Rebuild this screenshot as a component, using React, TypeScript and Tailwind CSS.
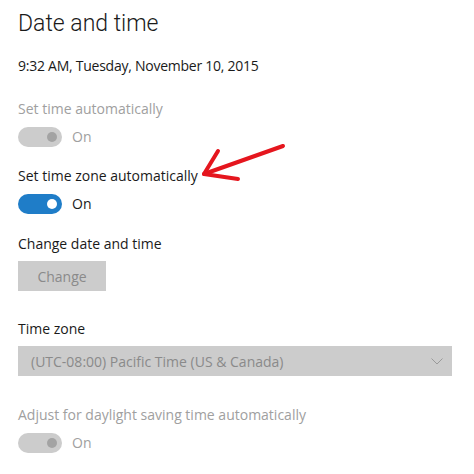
import React from "react";

const font = { fontFamily: '"Open Sans", "Noto Sans", sans-serif' };

function Toggle({ on, disabled }: { on?: boolean; disabled?: boolean }) {
  return (
    <div className="flex items-center h-[20px]">
      <div
        className={
          "w-[44px] h-[20px] rounded-full flex items-center justify-end pr-[5px] " +
          (disabled ? "bg-[#cccccc]" : "bg-[#1f7dc8]")
        }
      >
        <div
          className={
            "w-[10px] h-[10px] rounded-full " +
            (disabled ? "bg-[#a3a3a3]" : "bg-white")
          }
        />
      </div>
      <span
        className={
          "ml-[10px] text-[14px] leading-[20px] " +
          (disabled ? "text-[#a0a0a0]" : "text-[#1a1a1a]")
        }
      >
        On
      </span>
    </div>
  );
}

export default function App() {
  return (
    <div
      className="relative w-[474px] h-[474px] bg-white overflow-hidden pl-[18px] pt-[8px] flex flex-col"
      style={font}
    >
      <div
        className="text-[23px] leading-[32px] font-light text-[#1a1a1a]"
        style={{ fontFamily: 'Roboto, "Open Sans", sans-serif' }}
      >
        Date and time
      </div>
      <div className="mt-[16px] text-[14px] leading-[20px] tracking-[-0.25px] text-[#1a1a1a]">
        9:32 AM, Tuesday, November 10, 2015
      </div>

      <div className="mt-[23px] text-[14px] leading-[20px] text-[#a0a0a0]">Set time automatically</div>
      <div className="mt-[8px]">
        <Toggle disabled />
      </div>

      <div className="mt-[19px] text-[14px] leading-[20px] text-[#1a1a1a]">Set time zone automatically</div>
      <div className="mt-[8px]">
        <Toggle on />
      </div>

      <div className="mt-[20px] text-[14px] leading-[20px] text-[#1a1a1a]">Change date and time</div>
      <div className="mt-[7px] w-[88px] h-[30px] bg-[#cccccc] flex items-center justify-center text-[14px] text-[#8a8a8a]">
        Change
      </div>

      <div className="mt-[28px] text-[14px] leading-[20px] text-[#1a1a1a]">Time zone</div>
      <div className="mt-[7px] w-[434px] h-[30px] bg-[#cccccc] flex items-center justify-between pl-[13px] pr-[9px] text-[14px] text-[#8a8a8a]">
        <span>(UTC-08:00) Pacific Time (US &amp; Canada)</span>
        <svg width="12" height="7" viewBox="0 0 12 7" fill="none">
          <path d="M0.5 0.5 L6 6 L11.5 0.5" stroke="#9a9a9a" strokeWidth="1" />
        </svg>
      </div>

      <div className="mt-[29px] text-[14px] leading-[20px] text-[#a0a0a0]">
        Adjust for daylight saving time automatically
      </div>
      <div className="mt-[8px]">
        <Toggle disabled />
      </div>

      <svg
        className="absolute left-0 top-0 pointer-events-none"
        width="474"
        height="474"
        viewBox="0 0 474 474"
      >
        <g stroke="#e5161e" strokeWidth="4" strokeLinecap="round" strokeLinejoin="round" fill="none">
          <path d="M283 146 L204 174" />
          <path d="M218 151 L204 174 L238 179" />
        </g>
      </svg>
    </div>
  );
}
